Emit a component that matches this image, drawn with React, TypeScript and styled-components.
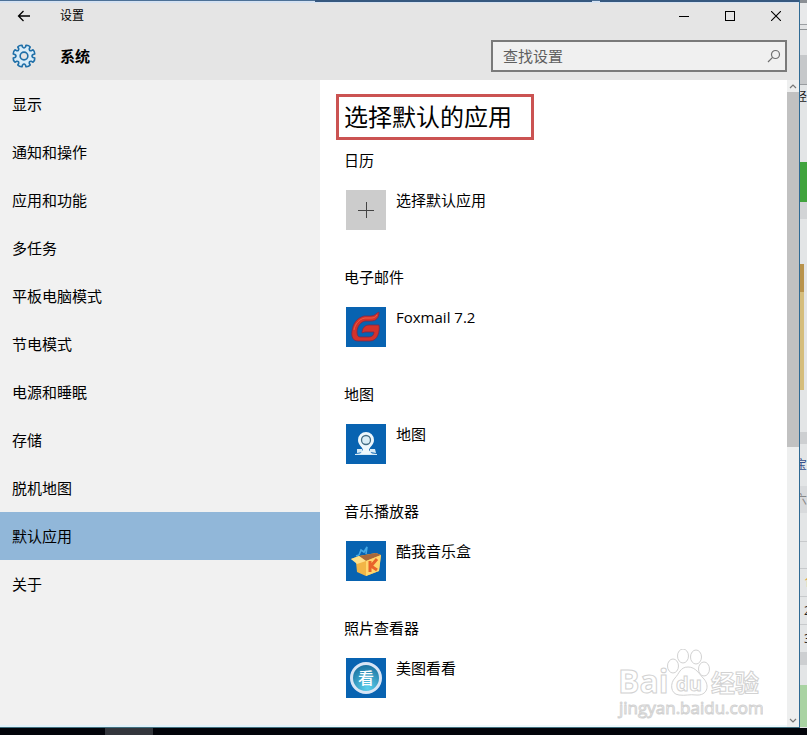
import React from 'react';
import styled, { createGlobalStyle } from 'styled-components';

const GlobalStyle = createGlobalStyle`
  * { box-sizing: border-box; }
  body {
    margin: 0;
    overflow: hidden;
    background: #02040a;
    color: #000;
    font: 15px/20px "Open Sans", "Noto Sans CJK SC", sans-serif;
  }
  button, input { font: inherit; color: inherit; }
`;

const Desktop = styled.div`
  display: grid;
  grid-template: minmax(0, 1fr) 7px / minmax(0, 1fr) 7px;
  height: 100vh;
`;

const Window = styled.div`
  display: flex;
  flex-direction: column;
  min-height: 0;
  background: #e5e5e5;
  border-right: 1px solid #2f6a94;
  border-bottom: 1px solid #41707f;
`;

const TopEdge = styled.div`
  display: flex;
  height: 3px;
  background: #d5e2f2;
`;

const EdgeLine = styled.div<{ $grow: number; $thick?: boolean }>`
  flex: ${(p) => p.$grow};
  height: ${(p) => (p.$thick ? 2 : 1)}px;
  background: ${(p) => (p.$thick ? '#36587f' : '#4d7196')};
`;

const TitleBar = styled.div`
  display: flex;
  align-items: center;
  height: 26px;
  font-size: 12px;
`;

const BarButton = styled.button<{ $width: number }>`
  display: grid;
  place-items: center;
  width: ${(p) => p.$width}px;
  height: 26px;
  padding: 0;
  border: 0;
  background: none;
`;

const TitleText = styled.span`
  flex: 1;
  padding-left: 12px;
`;

const Header = styled.header`
  display: flex;
  align-items: center;
  height: 51px;
  padding: 3px 12px 0;
  gap: 24px;
`;

const PageName = styled.h1`
  flex: 1;
  margin: 0;
  font-size: 15px;
  line-height: 20px;
  font-weight: 700;
`;

const SearchBox = styled.label`
  display: flex;
  align-items: center;
  width: 296px;
  height: 32px;
  padding: 0 4px 0 10px;
  border: 2px solid #7a7a7a;
  background: #f0f0f0;
`;

const SearchInput = styled.input`
  flex: 1;
  min-width: 0;
  padding: 0;
  border: 0;
  outline: 0;
  background: none;
  &::placeholder { color: #5f5f5f; opacity: 1; }
`;

const Body = styled.div`
  display: flex;
  flex: 1;
  min-height: 0;
  background: #fff;
`;

const Sidebar = styled.nav`
  width: 320px;
  background: #f1f1f1;
  border-bottom: 2px solid #e2f2fa;
`;

const NavLink = styled.a<{ $active?: boolean }>`
  display: flex;
  align-items: center;
  height: 48px;
  padding: 0 12px;
  color: inherit;
  text-decoration: none;
  background: ${(p) => (p.$active ? '#91b7d9' : 'transparent')};
`;

const Content = styled.main`
  position: relative;
  flex: 1;
  min-width: 0;
  overflow: hidden;
  padding: 14px 16px 0;
  border-bottom: 2px solid #effafd;
`;

const Heading = styled.h2`
  width: fit-content;
  margin: 0 0 10px;
  padding: 4px 19px 4px 5px;
  border: 3px solid #cb5352;
  font-size: 24px;
  line-height: 32px;
  font-weight: 400;
`;

const Section = styled.section`
  height: 117px;
  padding-left: 8px;
`;

const SectionName = styled.h3`
  margin: 0 0 20px;
  font-size: 15px;
  line-height: 20px;
  font-weight: 400;
`;

const AppButton = styled.button`
  display: flex;
  align-items: flex-start;
  gap: 10px;
  padding: 0 0 0 2px;
  border: 0;
  background: none;
  text-align: left;
`;

const Tile = styled.span<{ $color: string }>`
  display: block;
  width: 40px;
  height: 40px;
  background: ${(p) => p.$color};
  svg { display: block; }
`;

const Scrollbar = styled.div`
  display: flex;
  flex-direction: column;
  width: 12px;
  background: #eeefef;
`;

const ScrollArrow = styled.div`
  display: grid;
  place-items: center;
  height: 12px;
`;

const Track = styled.div`
  flex: 1;
`;

const Thumb = styled.div`
  height: 57%;
  background: #c1c1c1;
`;

const Watermark = styled.div`
  position: absolute;
  right: 24px;
  bottom: 0;
  svg { display: block; }
`;

const Behind = styled.div`
  display: flex;
  flex-direction: column;
  overflow: hidden;
  background: #e3e5e6;
`;

const Strip = styled.div<{ $h: number; $bg: string; $ink?: string; $end?: boolean }>`
  display: flex;
  flex: none;
  align-items: center;
  justify-content: ${(p) => (p.$end ? 'flex-end' : 'flex-start')};
  height: ${(p) => p.$h}px;
  padding-left: ${(p) => (p.$end ? 0 : 4)}px;
  overflow: hidden;
  background: ${(p) => p.$bg};
  color: ${(p) => p.$ink ?? '#222'};
  font-size: 12px;
`;

const Taskbar = styled.div`
  display: flex;
  grid-column: 1 / -1;
  padding-left: 105px;
  background: #02040a;
`;

const TaskItem = styled.div`
  width: 48px;
  background: #33363c;
`;

const strips: { h: number; bg: string; ink?: string; text?: string; end?: boolean }[] = [
  { h: 3, bg: '#8b8f94' },
  { h: 21, bg: '#e8e9ea' },
  { h: 1, bg: '#9c9fa2' },
  { h: 4, bg: '#e3e4e5' },
  { h: 1, bg: '#8f9396' },
  { h: 25, bg: '#e3e4e5' },
  { h: 29, bg: '#c6c8ca' },
  { h: 1, bg: '#999c9f' },
  { h: 23, bg: '#e3e5e6', text: '经', end: true },
  { h: 54, bg: '#e3e5e6' },
  { h: 40, bg: '#40a43d' },
  { h: 17, bg: '#d2d4d6' },
  { h: 45, bg: '#e3e5e6' },
  { h: 28, bg: 'linear-gradient(90deg, #b9934b 4px, #e3e5e6 4px)' },
  { h: 98, bg: 'linear-gradient(90deg, #d5bd7b 4px, #e3e5e6 4px)' },
  { h: 42, bg: '#e3e5e6' },
  { h: 12, bg: '#cdcfd1' },
  { h: 42, bg: '#e3e5e6', ink: '#36508b', text: '宝', end: true },
  { h: 27, bg: '#d8dadc', ink: '#888', text: '六', end: true },
  { h: 28, bg: '#e3e5e6' },
  { h: 1, bg: '#c8cacc' },
  { h: 26, bg: '#e3e5e6' },
  { h: 1, bg: '#c8cacc' },
  { h: 27, bg: '#e3e5e6', ink: '#e39a2c', text: '1' },
  { h: 1, bg: '#c8cacc' },
  { h: 27, bg: '#e3e5e6', text: '2' },
  { h: 1, bg: '#c8cacc' },
  { h: 27, bg: '#e3e5e6', text: '3' },
  { h: 13, bg: '#cdcfd1' },
  { h: 20, bg: '#e3e5e6' },
  { h: 42, bg: '#a9d3a2' },
];

function polar(r: number, deg: number) {
  const a = (deg * Math.PI) / 180;
  return `${(12.5 + r * Math.cos(a)).toFixed(2)} ${(12.5 + r * Math.sin(a)).toFixed(2)}`;
}

// Eight teeth with rounded valleys between them.
const gearPath =
  Array.from({ length: 8 }, (_, i) => {
    const a = i * 45 + 22.5;
    return `${i ? 'L' : 'M'}${polar(11.4, a - 12)}Q${polar(12.4, a)} ${polar(11.4, a + 12)}L${polar(9.6, a + 13)}Q${polar(7.2, a + 22.5)} ${polar(9.6, a + 32)}`;
  }).join('') + 'Z';

const BackIcon = () => (
  <svg width="14" height="12" viewBox="0 0 14 12" fill="none" stroke="#000" strokeWidth="1.3">
    <path d="M13 6H1.5M6.5 1L1.5 6l5 5" />
  </svg>
);

const GearIcon = () => (
  <svg width="24" height="24" viewBox="0 0 25 25" fill="#d9ecf8" stroke="#1f6fa8" strokeWidth="1.7" strokeLinejoin="round">
    <path d={gearPath} />
    <circle cx="12.5" cy="12.5" r="4" fill="#e5e5e5" />
  </svg>
);

const SearchIcon = () => (
  <svg width="14" height="14" viewBox="0 0 14 14" fill="none" stroke="#6f6f6f" strokeWidth="1.2">
    <circle cx="8.5" cy="5.5" r="4" />
    <path d="M5.6 8.4L1 13" />
  </svg>
);

const MinimizeIcon = () => (
  <svg width="10" height="10" stroke="#000" shapeRendering="crispEdges"><path d="M0 5.5h10" /></svg>
);
const MaximizeIcon = () => (
  <svg width="10" height="10" fill="none" stroke="#000" shapeRendering="crispEdges"><path d="M.5.5h9v9h-9z" /></svg>
);
const CloseIcon = () => (
  <svg width="10" height="10" stroke="#000" strokeWidth="1.1"><path d="M0 0l10 10M10 0L0 10" /></svg>
);

const Chevron = ({ down }: { down?: boolean }) => (
  <svg width="8" height="6" viewBox="0 0 8 6" fill="none" stroke="#777" strokeWidth="1.2">
    <path d={down ? 'M1 1l3 3 3-3' : 'M1 5l3-3 3 3'} />
  </svg>
);

const PlusArt = () => (
  <svg width="40" height="40" stroke="#444" shapeRendering="crispEdges"><path d="M12 20.5h16M20.5 12v16" /></svg>
);

const FoxmailArt = () => (
  <svg width="40" height="40" viewBox="0 0 40 40">
    <path d="M33 5c0 6-3 9-8 9h-6c-4 1-8 5-8 11 0 3 1 5 3 5h9c3 0 5-2 5-5h-9l-3 1c0-5 3-8 7-8h10c1 6-1 16-9 16H12c-5 0-7-4-6-10 1-8 5-13 12-15h7c4 0 5-3 8-4z" fill="#d5322b" stroke="#7c2a4a" strokeWidth="0.8" strokeLinejoin="round" />
    <path d="M31 8c-2 3-4 3-7 3h-5c-6 1-10 6-11 12" fill="none" stroke="#ea5c46" strokeWidth="1" />
  </svg>
);

const MapArt = () => (
  <svg width="40" height="40" viewBox="0 0 40 40">
    <path d="M11 25h5l1 3-6 1zM24 25h5l1 4-6-1zM9 30l8-1 3 1 3-1 8 1v1H9z" fill="#d5eaf7" />
    <path d="M20 8a8 8 0 0 1 8 8c0 5-4 6-5 10l3 4H14l3-4c-1-4-5-5-5-10a8 8 0 0 1 8-8z" fill="#edf7fc" />
    <circle cx="20" cy="16" r="4.500" fill="#d9edf6" stroke="#446c83" strokeWidth="1.300" />
  </svg>
);

const MusicArt = () => (
  <svg width="40" height="40" viewBox="0 0 40 40">
    <path d="M13 14l2-5 3 2 3-5-1 7M10 15l3-1" fill="none" stroke="#45a9e6" strokeWidth="1.6" />
    <path d="M5 18l8-3 17-3 5 2-2 16-13 5-9-4-1-10z" fill="#f2b546" />
    <path d="M13 15l17-3 5 2-15 6z" fill="#a7683b" />
    <path d="M5 18l8-3 7 5-9 3z" fill="#ffe08a" />
    <path d="M20 20l15-6-2 16-13 5z" fill="#ffd66d" />
    <path d="M24 20v11M31 18l-6 7 6 4" fill="none" stroke="#e8632b" strokeWidth="3" />
  </svg>
);

const ViewerArt = () => (
  <svg width="40" height="40" viewBox="0 0 40 40">
    <defs>
      <radialGradient id="lens" cx="55%" cy="85%" r="90%">
        <stop offset="0" stopColor="#5bd0ed" />
        <stop offset="1" stopColor="#126697" />
      </radialGradient>
    </defs>
    <circle cx="20" cy="20" r="14.500" fill="url(#lens)" stroke="#d8e5f5" strokeWidth="3" />
    <text x="20" y="26" fill="#fff" fontSize="16" fontWeight="500" textAnchor="middle" fontFamily="Noto Sans CJK SC, sans-serif">看</text>
  </svg>
);

const WatermarkArt = () => (
  <svg width="146" height="76" viewBox="0 0 146 76" fill="#fff" stroke="#d2d2d2" strokeWidth="1" fontFamily="Open Sans, Noto Sans CJK SC, sans-serif">
    <text x="1" y="44" fontSize="32" fontWeight="700">Bai</text>
    <ellipse cx="56" cy="17" rx="5.500" ry="7" />
    <ellipse cx="66" cy="7" rx="5.500" ry="7" />
    <ellipse cx="79" cy="8" rx="5.500" ry="7" />
    <ellipse cx="87" cy="20" rx="5.500" ry="7" />
    <path d="M71 18c-8 0-9 7-13 11-5 5-5 16 4 17 6 1 11-1 17 0 11 1 14-9 8-16-5-5-8-12-16-12z" />
    <text x="59" y="42" fontSize="20" fontWeight="700">du</text>
    <text x="94" y="43" fontSize="24" fontWeight="700">经验</text>
    <text x="2" y="65" fontSize="17">jingyan.baidu.com</text>
  </svg>
);

const navItems = ['显示', '通知和操作', '应用和功能', '多任务', '平板电脑模式', '节电模式', '电源和睡眠', '存储', '脱机地图', '默认应用', '关于'];

const apps = [
  { kind: '日历', name: '选择默认应用', color: '#cccccc', Art: PlusArt },
  { kind: '电子邮件', name: 'Foxmail 7.2', color: '#0863b1', Art: FoxmailArt },
  { kind: '地图', name: '地图', color: '#0863b1', Art: MapArt },
  { kind: '音乐播放器', name: '酷我音乐盒', color: '#0863b1', Art: MusicArt },
  { kind: '照片查看器', name: '美图看看', color: '#0863b1', Art: ViewerArt },
];

export default function App() {
  return (
    <>
      <GlobalStyle />
      <Desktop>
        <Window>
          <TopEdge>
            <EdgeLine $grow={315} />
            <EdgeLine $grow={277} $thick />
            <EdgeLine $grow={8} />
            <EdgeLine $grow={199} $thick />
          </TopEdge>
          <TitleBar>
            <BarButton $width={48} aria-label="返回"><BackIcon /></BarButton>
            <TitleText>设置</TitleText>
            <BarButton $width={46} aria-label="最小化"><MinimizeIcon /></BarButton>
            <BarButton $width={46} aria-label="最大化"><MaximizeIcon /></BarButton>
            <BarButton $width={46} aria-label="关闭"><CloseIcon /></BarButton>
          </TitleBar>
          <Header>
            <GearIcon />
            <PageName>系统</PageName>
            <SearchBox>
              <SearchInput type="text" placeholder="查找设置" aria-label="查找设置" />
              <SearchIcon />
            </SearchBox>
          </Header>
          <Body>
            <Sidebar>
              {navItems.map((item) => (
                <NavLink key={item} href="#" $active={item === '默认应用'}>{item}</NavLink>
              ))}
            </Sidebar>
            <Content>
              <Heading>选择默认的应用</Heading>
              {apps.map(({ kind, name, color, Art }) => (
                <Section key={kind}>
                  <SectionName>{kind}</SectionName>
                  <AppButton>
                    <Tile $color={color}><Art /></Tile>
                    {name}
                  </AppButton>
                </Section>
              ))}
              <Watermark><WatermarkArt /></Watermark>
            </Content>
            <Scrollbar aria-hidden="true">
              <ScrollArrow><Chevron /></ScrollArrow>
              <Track><Thumb /></Track>
              <ScrollArrow><Chevron down /></ScrollArrow>
            </Scrollbar>
          </Body>
        </Window>
        <Behind aria-hidden="true">
          {strips.map((s, i) => (
            <Strip key={i} $h={s.h} $bg={s.bg} $ink={s.ink} $end={s.end}>{s.text}</Strip>
          ))}
        </Behind>
        <Taskbar><TaskItem /></Taskbar>
      </Desktop>
    </>
  );
}
